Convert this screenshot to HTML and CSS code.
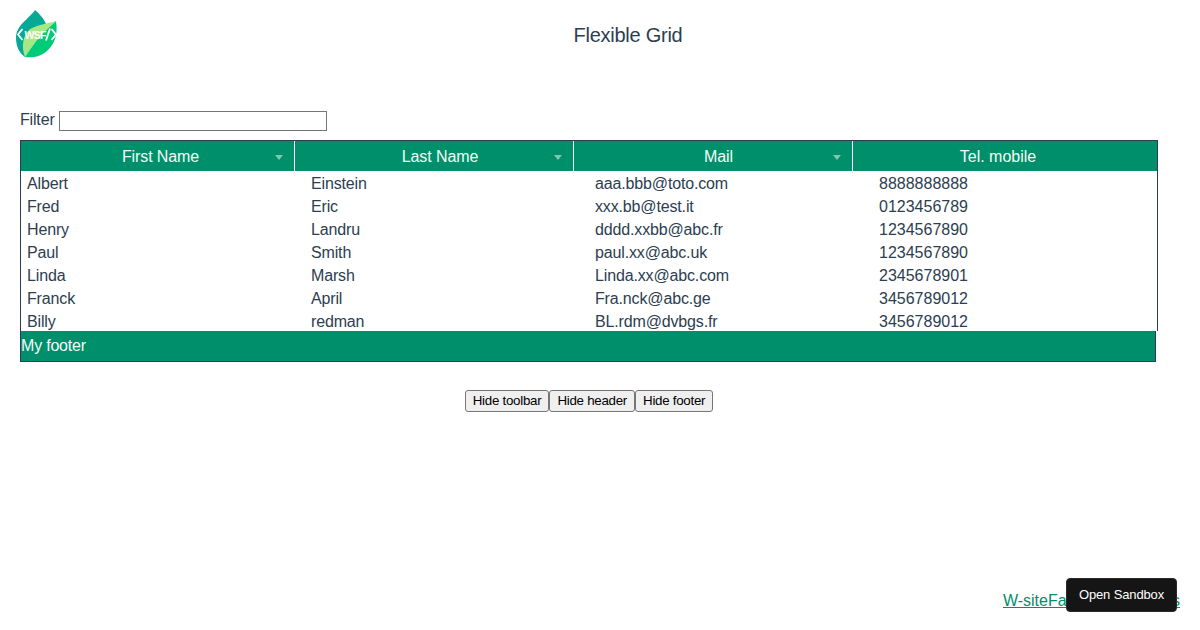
FILE: index.html
```html
<!DOCTYPE html>
<html lang="en">
<head>
<meta charset="utf-8">
<title>Flexible Grid</title>
<link rel="stylesheet" href="styles.css">
</head>
<body>
<header class="top">
  <div class="logo-box">
    <svg class="logo" viewBox="0 0 44 50" width="44" height="50" aria-hidden="true">
      <path d="M20 0 C25 4 29 9 31 14 L10 47 C4 43 1 36 1 28 C1 15 14 9 20 0 Z" fill="#06a896"/>
      <path d="M41 11 C43 24 40 33 33 40 C26 47 17 48 10 47 L25 25 Z" fill="#00cc77"/>
      <path d="M41 11 C32 14 20 15 14 20 C8 26 6 36 10 47 C18 33 29 22 41 11 Z" fill="#a6e884"/>
      <path d="M7.500 19 L3 24.500 L7.500 30 M36.500 19 L41 24.500 L36.500 30 M35 18.500 L31 30.500" fill="none" stroke="#fff" stroke-width="1.800"/>
      <text class="logo-text" x="9.500" y="28.800">WSF</text>
    </svg>
  </div>
  <h1 class="title">Flexible Grid</h1>
</header>
<main class="content">
  <div class="filter">
    <label class="filter-label" for="f">Filter</label>
    <input class="filter-input" id="f" type="text">
  </div>
  <div class="grid">
    <div class="grid-head">
      <div class="hcell h1">First Name<span class="caret"></span></div>
      <div class="hcell h2">Last Name<span class="caret"></span></div>
      <div class="hcell h3">Mail<span class="caret"></span></div>
      <div class="hcell h4">Tel. mobile</div>
    </div>
    <div class="grid-body">
      <div class="row"><span>Albert</span><span>Einstein</span><span>aaa.bbb@toto.com</span><span>8888888888</span></div>
      <div class="row"><span>Fred</span><span>Eric</span><span>xxx.bb@test.it</span><span>0123456789</span></div>
      <div class="row"><span>Henry</span><span>Landru</span><span>dddd.xxbb@abc.fr</span><span>1234567890</span></div>
      <div class="row"><span>Paul</span><span>Smith</span><span>paul.xx@abc.uk</span><span>1234567890</span></div>
      <div class="row"><span>Linda</span><span>Marsh</span><span>Linda.xx@abc.com</span><span>2345678901</span></div>
      <div class="row"><span>Franck</span><span>April</span><span>Fra.nck@abc.ge</span><span>3456789012</span></div>
      <div class="row"><span>Billy</span><span>redman</span><span>BL.rdm@dvbgs.fr</span><span>3456789012</span></div>
    </div>
  </div>
  <div class="grid-foot">My footer</div>
  <div class="actions">
    <button class="btn" type="button">Hide toolbar</button><button class="btn" type="button">Hide header</button><button class="btn" type="button">Hide footer</button>
  </div>
</main>
<footer class="links"><a class="link" href="#">W-siteFactory Examples</a></footer>
<button class="sandbox" type="button">Open Sandbox</button>
</body>
</html>
```
FILE: styles.css
```css
html, body { margin: 0; padding: 0; }
body {
  height: 630px;
  overflow: hidden;
  display: flex;
  flex-direction: column;
  font-family: "Liberation Sans", Arial, sans-serif;
  font-size: 16px;
  color: #2c3e50;
  background: #fff;
}
.top { display: flex; height: 70px; }
.logo-box { width: 56px; padding: 10px 0 0 15px; box-sizing: border-box; }
.logo { display: block; }
.logo-text { font-family: "Liberation Sans", Arial, sans-serif; font-size: 10.500px; font-weight: 700; letter-spacing: -0.7px; fill: #fff; }
.title { flex: 1; margin: 0; padding-top: 23px; text-align: center; font-size: 20px; line-height: 24px; font-weight: 400; letter-spacing: -0.25px; }
.content { width: 1138px; margin: 40px 0 0 20px; }
.filter { display: flex; align-items: center; gap: 4px; height: 21px; }
.filter-label { line-height: 18px; margin-top: -2px; letter-spacing: -0.17px; }
.filter-input { width: 268px; height: 20px; box-sizing: border-box; margin: 0; padding: 1px 2px; border: 1px solid #767676; background: #fff; }
.grid { margin-top: 9px; border: 1px solid #2c3e50; border-bottom: 0; height: 190px; overflow: hidden; }
.grid-head { display: flex; height: 30px; background: #008f6b; color: #f4fbf7; }
.hcell { position: relative; box-sizing: border-box; padding-top: 1px; line-height: 30px; text-align: center; border-right: 1px solid #fff; letter-spacing: -0.1px; }
.h1 { width: 274px; padding-left: 6px; }
.h2 { width: 279px; padding-left: 12px; }
.h3 { width: 279px; padding-left: 11px; }
.h4 { flex: 1; padding-right: 14px; border-right: 0; letter-spacing: 0; }
.caret { position: absolute; right: 11px; top: 14px; width: 0; height: 0; border-left: 4px solid transparent; border-right: 4px solid transparent; border-top: 5px solid #7fc7b5; }
.grid-body { height: 160px; overflow: hidden; padding-top: 1px; box-sizing: border-box; }
.row { display: grid; grid-template-columns: repeat(4, 284px); height: 23px; line-height: 23px; }
.row span { padding-left: 6px; letter-spacing: -0.15px; }
.row span:last-child { letter-spacing: 0; }
.grid-foot { width: 1136px; height: 31px; box-sizing: border-box; border-left: 1px solid #2c3e50; border-right: 1px solid #2c3e50; border-bottom: 1px solid #2c3e50; background: #008f6b; color: #f4fbf7; line-height: 30px; letter-spacing: -0.2px; }
.actions { display: flex; justify-content: center; margin-top: 28px; }
.btn { height: 22px; margin: 0; padding: 0 7px 2px; font-family: "Liberation Sans", Arial, sans-serif; font-size: 13.333px; letter-spacing: -0.27px; color: #000; background: #efefef; border: 1px solid #767676; border-radius: 3px; box-sizing: border-box; }
.links { margin-top: auto; padding: 0 20px 19px 0; text-align: right; line-height: 20px; word-spacing: 4px; }
.link { color: #008f6b; }
.sandbox { position: absolute; left: 1066px; top: 578px; width: 111px; height: 34px; padding: 0 0 2px; background: #151515; color: #fff; border: 1px solid #2a2a2a; border-radius: 4px; font-family: "Liberation Sans", Arial, sans-serif; font-size: 13px; letter-spacing: -0.14px; }
```
